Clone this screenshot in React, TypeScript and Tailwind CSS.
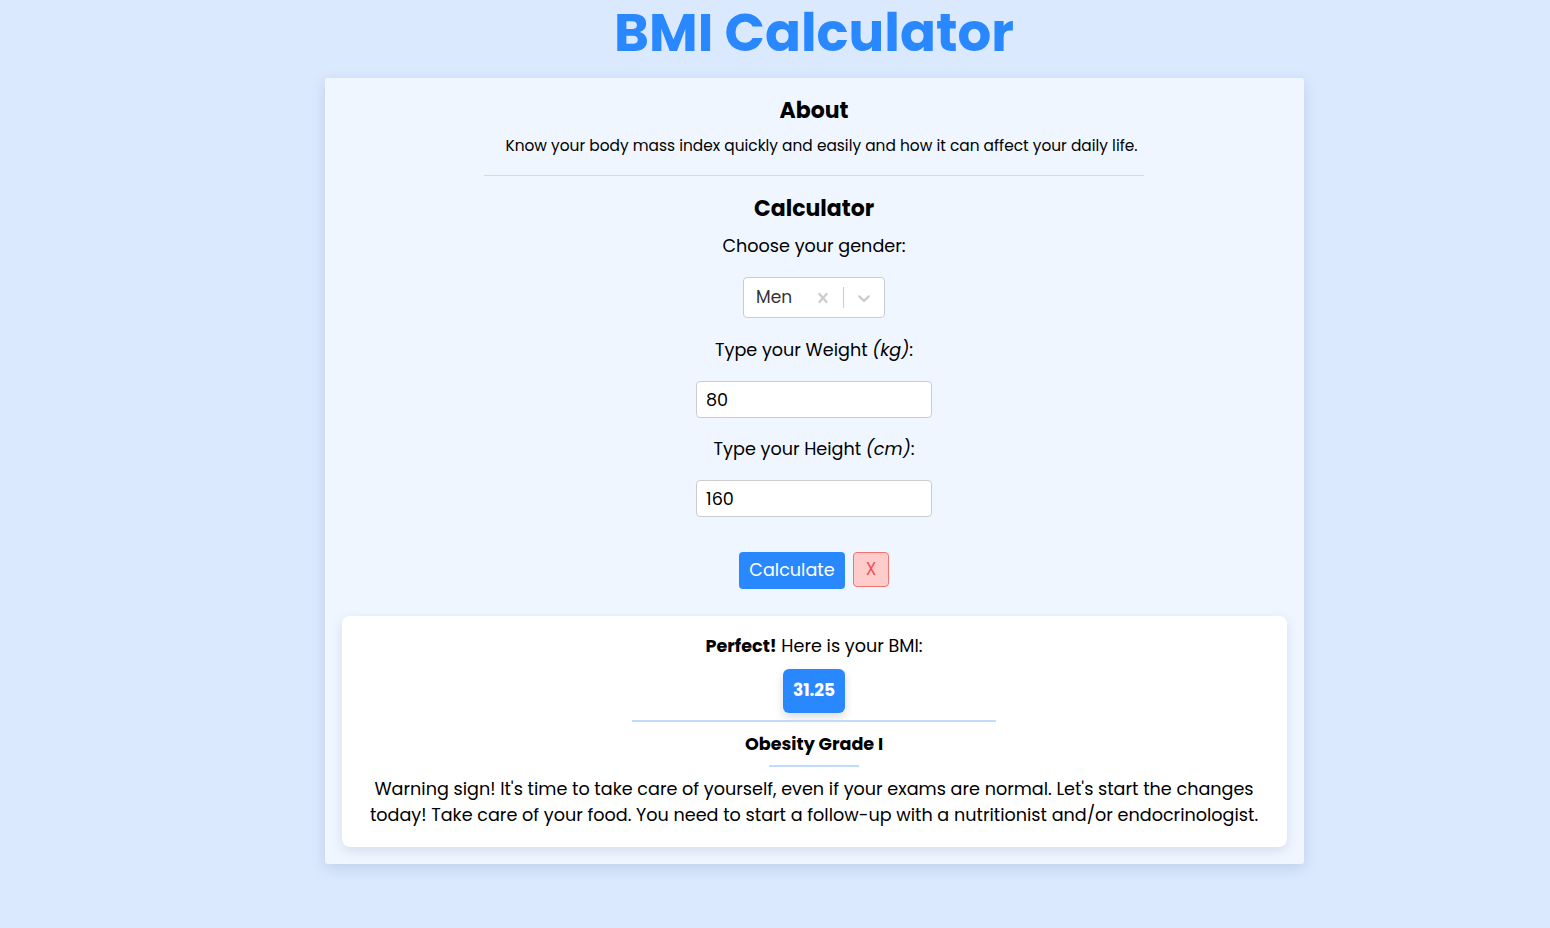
const font = "font-['Poppins','Open_Sans',sans-serif]";

function Label({ children }: { children: React.ReactNode }) {
  return <p className="text-[17.6px] leading-[27px] text-black">{children}</p>;
}

function CrossIcon() {
  return (
    <svg viewBox="0 0 20 20" className="h-[20px] w-[20px] fill-[#cccccc]" aria-hidden="true">
      <path d="M14.348 14.849c-0.469 0.469-1.229 0.469-1.697 0l-2.651-3.030-2.651 3.029c-0.469 0.469-1.229 0.469-1.697 0-0.469-0.469-0.469-1.229 0-1.697l2.758-3.15-2.759-3.152c-0.469-0.469-0.469-1.228 0-1.697s1.228-0.469 1.697 0l2.652 3.031 2.651-3.031c0.469-0.469 1.228-0.469 1.697 0s0.469 1.229 0 1.697l-2.758 3.152 2.758 3.15c0.469 0.469 0.469 1.229 0 1.698z" />
    </svg>
  );
}

function ChevronIcon() {
  return (
    <svg viewBox="0 0 20 20" className="h-[20px] w-[20px] fill-[#cccccc]" aria-hidden="true">
      <path d="M4.516 7.548c0.436-0.446 1.043-0.481 1.576 0l3.908 3.747 3.908-3.747c0.533-0.481 1.141-0.446 1.574 0 0.436 0.445 0.408 1.197 0 1.615-0.406 0.418-4.695 4.502-4.695 4.502-0.217 0.223-0.502 0.335-0.787 0.335s-0.57-0.112-0.789-0.335c0 0-4.287-4.084-4.695-4.502s-0.436-1.17 0-1.615z" />
    </svg>
  );
}

export default function App() {
  return (
    <div className={`min-h-screen bg-[#dbe9fe] pl-[78px] pt-[4px] ${font}`}>
      <h1 className="text-center text-[53px] font-bold leading-[58px] text-[#2a88ff]">
        BMI Calculator
      </h1>

      <main className="mx-auto mt-4 flex w-[979px] flex-col items-center rounded-[3px] bg-[#eff6ff] px-[17px] pb-[17px] pt-[17px] text-center shadow-[0_4px_14px_rgba(60,90,140,0.18)]">
        <h2 className="text-[22px] font-bold leading-[32px] text-black">About</h2>
        <p className="mt-2 pl-[15px] text-[15.4px] leading-[22px] text-black">
          Know your body mass index quickly and easily and how it can affect your daily life.
        </p>
        <hr className="mt-[18px] w-[660px] border-t border-[#c9dcf3]" />

        <h2 className="mt-[17px] text-[22px] font-bold leading-[32px] text-black">Calculator</h2>
        <div className="mt-[8px]">
          <Label>Choose your gender:</Label>
        </div>

        <div className="mt-[17px] flex h-[41px] w-[142px] items-center rounded-[4px] border border-[#cccccc] bg-white">
          <span className="flex-1 pl-3 text-left text-[17px] text-[#333333]">Men</span>
          <CrossIcon />
          <span className="ml-[10px] h-[21px] w-px bg-[#cccccc]" />
          <span className="ml-[10px] mr-[10px]">
            <ChevronIcon />
          </span>
        </div>

        <div className="mt-[19px]">
          <Label>
            Type your Weight <i>(kg)</i>:
          </Label>
        </div>
        <input
          readOnly
          value="80"
          className="mt-[17px] h-[37px] w-[236px] rounded-[4px] border border-[#cccccc] bg-white px-[9px] text-[17.6px] text-black outline-none"
        />

        <div className="mt-[18px]">
          <Label>
            Type your Height <i>(cm)</i>:
          </Label>
        </div>
        <input
          readOnly
          value="160"
          className="mt-[17px] h-[37px] w-[236px] rounded-[4px] border border-[#cccccc] bg-white px-[9px] text-[17.6px] text-black outline-none"
        />

        <div className="mt-[35px] flex items-start gap-2">
          <button
            type="button"
            className="h-[37px] w-[106px] rounded-[4px] bg-[#2a88ff] text-[17.6px] text-white"
          >
            Calculate
          </button>
          <button
            type="button"
            className="h-[35px] w-[36px] rounded-[4px] border border-[#f87171] bg-[#ffcccc] text-[17px] text-[#f05252]"
          >
            X
          </button>
        </div>

        <section className="mt-[27px] flex w-full flex-col items-center rounded-[8px] bg-white px-3 pb-[19px] pt-[17px] shadow-[0_4px_12px_rgba(60,90,140,0.15)]">
          <p className="text-[17.6px] leading-[26px] text-black">
            <b>Perfect!</b> Here is your BMI:
          </p>
          <div className="mt-[10px] flex h-[44px] w-[62px] items-center justify-center rounded-[6px] bg-[#2a88ff] text-[17px] font-bold text-white shadow-[0_4px_10px_rgba(0,0,0,0.15)]">
            31.25
          </div>
          <div className="mt-[7px] h-[2px] w-[364px] bg-[#bfdbfe]" />
          <h3 className="mt-[9px] text-[17.6px] font-bold leading-[26px] text-black">Obesity Grade I</h3>
          <div className="mt-[8px] h-[2px] w-[90px] bg-[#bfdbfe]" />
          <p className="mt-[9px] text-[17.6px] leading-[26px] text-black">
            Warning sign! It's time to take care of yourself, even if your exams are normal. Let's start the changes
            <br />
            today! Take care of your food. You need to start a follow-up with a nutritionist and/or endocrinologist.
          </p>
        </section>
      </main>
    </div>
  );
}
